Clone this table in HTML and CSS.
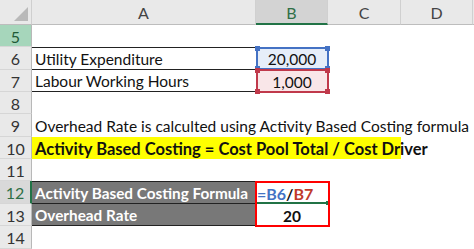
FILE: index.html
```html
<!DOCTYPE html>
<html>
<head>
<meta charset="utf-8">
<link rel="stylesheet" href="styles.css">
</head>
<body>
<div class="sheet">
  <div class="corner"><span class="tri"></span></div>
  <div class="colhead">A</div>
  <div class="colhead sel">B</div>
  <div class="colhead">C</div>
  <div class="colhead">D</div>
  <div class="colhead rest"></div>

  <div class="rowhead sel-green">5</div>
  <div class="cell"></div><div class="cell"></div><div class="cell"></div><div class="cell"></div><div class="cell"></div>

  <div class="rowhead">6</div>
  <div class="cell a bordered top">Utility Expenditure</div>
  <div class="cell num blue-fill">20,000</div><div class="cell"></div><div class="cell"></div><div class="cell"></div>

  <div class="rowhead">7</div>
  <div class="cell a bordered">Labour Working Hours</div>
  <div class="cell num red-fill">1,000</div><div class="cell"></div><div class="cell"></div><div class="cell"></div>

  <div class="rowhead">8</div>
  <div class="cell"></div><div class="cell"></div><div class="cell"></div><div class="cell"></div><div class="cell"></div>

  <div class="rowhead">9</div>
  <div class="cell a overflow">Overhead Rate is calculted using Activity Based Costing formula</div>
  <div class="cell"></div><div class="cell"></div><div class="cell"></div><div class="cell"></div>

  <div class="rowhead">10</div>
  <div class="cell a yellow">Activity Based Costing = Cost Pool Total / Cost Driver</div>
  <div class="cell"></div><div class="cell"></div>

  <div class="rowhead">11</div>
  <div class="cell"></div><div class="cell"></div><div class="cell"></div><div class="cell"></div><div class="cell"></div>

  <div class="rowhead active">12</div>
  <div class="cell a dark top">Activity Based Costing Formula</div>
  <div class="cell formula"><span class="eq">=</span><span class="ref-b">B6</span>/<span class="ref-r">B7</span></div>
  <div class="cell"></div><div class="cell"></div><div class="cell"></div>

  <div class="rowhead">13</div>
  <div class="cell a dark">Overhead Rate</div>
  <div class="cell num bold">20</div>
  <div class="cell"></div><div class="cell"></div><div class="cell"></div>

  <div class="rowhead">14</div>
  <div class="cell"></div><div class="cell"></div><div class="cell"></div><div class="cell"></div><div class="cell"></div>

  <div class="box blue-box"><i class="h tl"></i><i class="h tr"></i><i class="h bl"></i><i class="h br"></i></div>
  <div class="box red-box"><i class="h tl"></i><i class="h tr"></i><i class="h bl"></i><i class="h br"></i></div>
  <div class="green-line"><i class="fill"></i></div>
  <div class="outline"></div>
</div>
</body>
</html>
```

FILE: styles.css
```css
* { box-sizing: border-box; }
html, body { margin: 0; padding: 0; background: #fff; }
body { font-family: "Lato", "Liberation Sans", sans-serif; font-size: 15.5px; color: #111; }

.sheet {
  position: relative;
  display: grid;
  grid-template-columns: 32px 224px 72px 73px 72px 1fr;
  grid-template-rows: 25px 22px 23px 22px 22px 23px 22px 22px 23px 22px 23px;
  width: 474px;
  height: 249px;
  overflow: hidden;
}

.corner {
  background: #e9e9e9;
  border-right: 1px solid #cfcfcf;
  border-bottom: 1px solid #bdbdbd;
  position: relative;
}
.tri {
  position: absolute;
  right: 3px;
  bottom: 3px;
  width: 0; height: 0;
  border-left: 14px solid transparent;
  border-bottom: 14px solid #b9b9b9;
}

.colhead {
  background: #e9e9e9;
  border-right: 1px solid #d0d0d0;
  border-bottom: 1px solid #bdbdbd;
  display: flex;
  align-items: center;
  justify-content: center;
  color: #444;
  font-size: 16px;
  padding-top: 1px;
}
.colhead.sel {
  background: #d3d3d3;
  color: #2f6f47;
  border-bottom: 2px solid #217346;
}
.colhead.rest { border-right: none; }

.rowhead {
  background: #e9e9e9;
  border-right: 1px solid #b8b8b8;
  border-bottom: 1px solid #d6d6d6;
  display: flex;
  align-items: center;
  justify-content: center;
  color: #333;
  font-size: 16px;
  padding-top: 1px;
}
.rowhead.sel-green { background: #a6d6bb; color: #1e5a36; }
.rowhead.active { background: #d9d9d9; border-right: 2px solid #217346; color: #2f6f47; }

.cell {
  display: flex;
  align-items: center;
  padding: 1px 3px 0;
  white-space: nowrap;
  min-width: 0;
}
.cell.a { overflow: visible; }
.cell.bordered { border-bottom: 1px solid #222; }
.cell.bordered.top { border-top: 1px solid #222; }
.cell.num { justify-content: center; }
.cell.bold { font-weight: 700; }

.blue-fill { background: #e6eef9; }
.red-fill { background: #f9e6e8; }

.yellow {
  grid-column: span 3;
  background: #ffff00;
  font-weight: 700;
  font-size: 16.5px;
}

.dark {
  background: #787878;
  color: #fff;
  font-weight: 700;
  font-size: 15.3px;
  border-bottom: 1px solid #222;
}
.dark.top { border-top: 1px solid #222; }

.formula { font-weight: 700; padding-left: 1px; font-size: 16px; }
.eq { color: #4472c4; }
.ref-b { color: #4472c4; }
.ref-r { color: #c0392b; }

.box { position: absolute; pointer-events: none; }
.blue-box {
  left: 256px; top: 47px; width: 73px; height: 23px;
  border: 2px solid #4472c4;
}
.blue-box .h { background: #4472c4; }
.red-box {
  left: 256px; top: 69px; width: 73px; height: 24px;
  border: 2px solid #c0394b;
}
.red-box .h { background: #c0394b; }
.h { position: absolute; width: 5px; height: 5px; }
.h.tl { left: -3px; top: -3px; }
.h.tr { right: -3px; top: -3px; }
.h.bl { left: -3px; bottom: -3px; }
.h.br { right: -3px; bottom: -3px; }

.green-line {
  position: absolute;
  left: 256px; top: 202px; width: 72px; height: 2px;
  background: #217346;
}
.green-line .fill {
  position: absolute; right: -2px; top: -1px;
  width: 4px; height: 4px; background: #217346;
}
.outline {
  position: absolute;
  left: 255px; top: 181px; width: 75px; height: 46px;
  border: 2px solid #ff0000;
}
```
